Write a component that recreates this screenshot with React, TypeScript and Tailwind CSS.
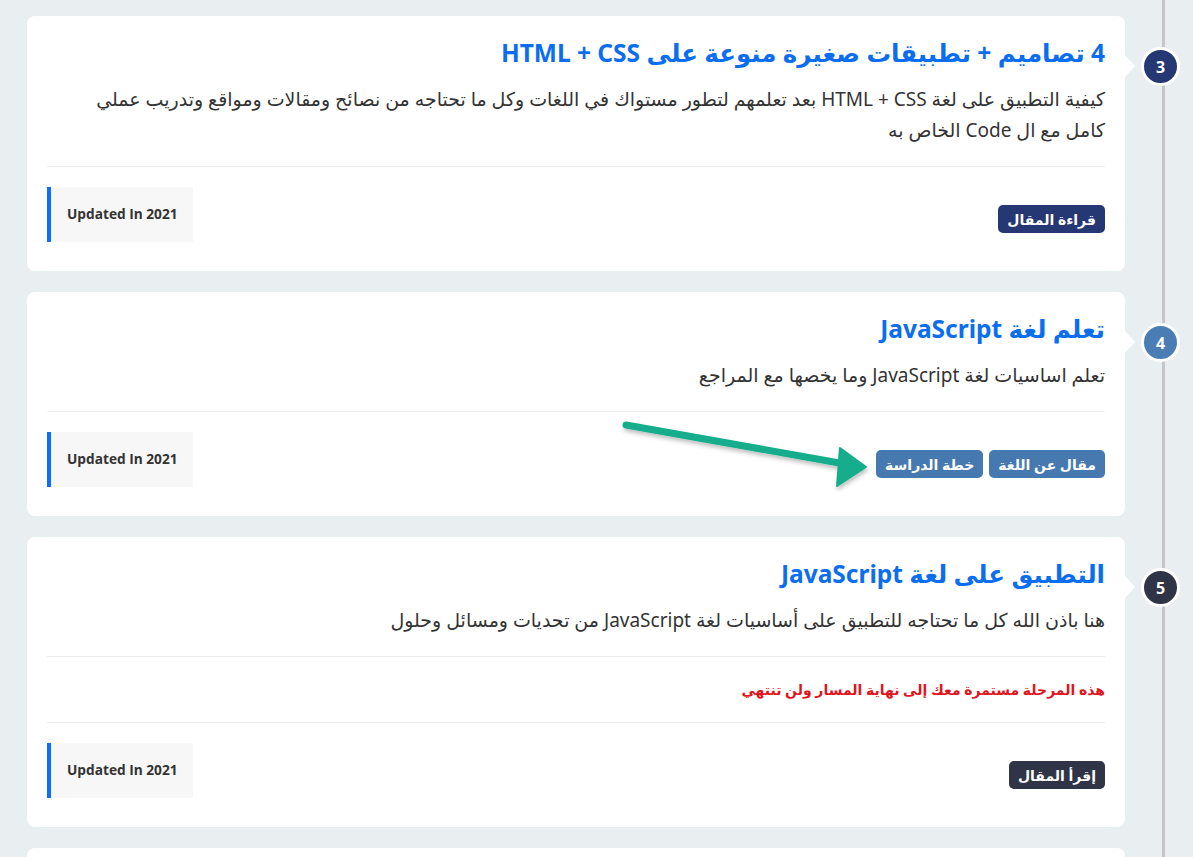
import React from "react";

const FONT = { fontFamily: '"Noto Sans", "DejaVu Sans", sans-serif' };

function UpdatedBox() {
  return (
    <div
      dir="ltr"
      className="flex h-[55px] w-[146px] items-center border-l-4 border-[#0d6efd] bg-[#f7f7f7] pl-4"
    >
      <span className="text-[13.7px] font-bold text-[#333]" style={{ fontFamily: '"Open Sans", "Noto Sans", sans-serif' }}>
        Updated In 2021
      </span>
    </div>
  );
}

function Btn({ label, color }: { label: string; color: string }) {
  return (
    <span
      className={`inline-flex h-[28px] items-center rounded-[5px] px-[9px] text-[14px] font-bold text-white ${color}`}
    >
      {label}
    </span>
  );
}

function Card({
  num,
  circle,
  title,
  desc,
  extra,
  buttons,
}: {
  num: number;
  circle: string;
  title: string;
  desc: React.ReactNode;
  extra?: React.ReactNode;
  buttons: React.ReactNode;
}) {
  return (
    <div className="flex">
      <div dir="rtl" className="relative flex-1 rounded-lg bg-white px-5 pt-5">
        <h2 className="text-[24.5px] font-bold leading-[34px] text-[#0b6ef0]">{title}</h2>
        <p className="mt-[14px] text-[19px] leading-[31px] text-[#333]">{desc}</p>
        <div className="mt-5 border-t border-[#ececec]" />
        {extra}
        <div className="flex items-start justify-between pt-5 pb-[29px]">
          <div className="mt-[18px] flex gap-[6px]">{buttons}</div>
          <UpdatedBox />
        </div>
        <div className="absolute right-[-10px] top-[39px] h-0 w-0 border-y-[11px] border-l-[10px] border-y-transparent border-l-white" />
      </div>
      <div className="relative w-[68px]">
        <div
          className={`absolute left-[16px] top-[31px] flex h-[39px] w-[39px] items-center justify-center rounded-full border-[3px] border-white text-[16px] font-bold text-white ${circle}`}
        >
          {num}
        </div>
      </div>
    </div>
  );
}

export default function App() {
  return (
    <div className="relative min-h-[857px] overflow-hidden bg-[#e9eef0]" style={FONT}>
      <div className="absolute bottom-0 left-[1162px] top-0 w-[3px] bg-[#c6c6c6]" />
      <div className="relative flex flex-col gap-[21px] pl-[27px] pt-4">
        <Card
          num={3}
          circle="bg-[#263873]"
          title="4 تصاميم + تطبيقات صغيرة منوعة على HTML + CSS"
          desc={
            <>
              كيفية التطبيق على لغة HTML + CSS بعد تعلمهم لتطور مستواك في اللغات وكل ما تحتاجه من نصائح ومقالات ومواقع وتدريب عملي
              <br />
              كامل مع ال Code الخاص به
            </>
          }
          buttons={<Btn label="قراءة المقال" color="bg-[#263873]" />}
        />
        <Card
          num={4}
          circle="bg-[#4a7db4]"
          title="تعلم لغة JavaScript"
          desc="تعلم اساسيات لغة JavaScript وما يخصها مع المراجع"
          buttons={
            <>
              <Btn label="مقال عن اللغة" color="bg-[#4679b0]" />
              <Btn label="خطة الدراسة" color="bg-[#4679b0]" />
            </>
          }
        />
        <Card
          num={5}
          circle="bg-[#2f3446]"
          title="التطبيق على لغة JavaScript"
          desc="هنا باذن الله كل ما تحتاجه للتطبيق على أساسيات لغة JavaScript من تحديات ومسائل وحلول"
          extra={
            <>
              <p className="pt-[19px] pb-[18px] text-[14px] font-bold leading-[28px] text-[#e0141e]">
                هذه المرحلة مستمرة معك إلى نهاية المسار ولن تنتهي
              </p>
              <div className="border-t border-[#ececec]" />
            </>
          }
          buttons={<Btn label="إقرأ المقال" color="bg-[#2f3446]" />}
        />
        <div className="flex">
          <div className="h-[200px] flex-1 rounded-lg bg-white" />
          <div className="w-[68px]" />
        </div>
      </div>
      <svg
        className="pointer-events-none absolute left-0 top-0"
        width="1193"
        height="857"
        viewBox="0 0 1193 857"
      >
        <defs>
          <filter id="sh" x="-10%" y="-50%" width="120%" height="200%">
            <feDropShadow dx="1" dy="3" stdDeviation="2" floodColor="#000" floodOpacity="0.25" />
          </filter>
        </defs>
        <g filter="url(#sh)" fill="#17ad8c" stroke="#17ad8c">
          <line x1="626" y1="425" x2="845" y2="464" strokeWidth="7" strokeLinecap="round" />
          <polygon points="840,448 866,467 837,486" strokeWidth="2" strokeLinejoin="round" />
        </g>
      </svg>
    </div>
  );
}
